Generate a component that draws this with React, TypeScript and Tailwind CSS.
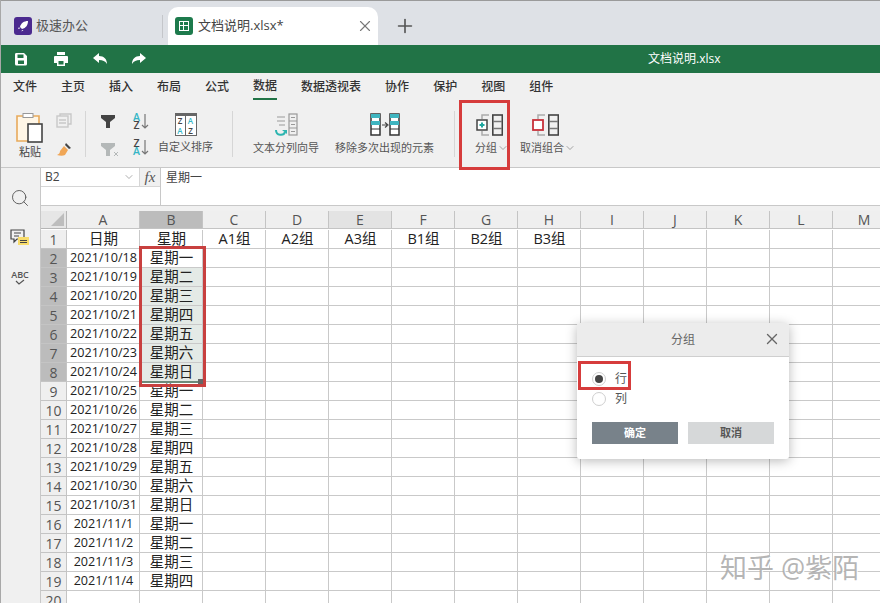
import { ChevronDown, Plus, Search, X } from "lucide-react";

const COLUMNS = ["A", "B", "C", "D", "E", "F", "G", "H", "I", "J", "K", "L", "M"];
const MENU = ["文件", "主页", "插入", "布局", "公式", "数据", "数据透视表", "协作", "保护", "视图", "组件"];
const DATES = [
  "2021/10/18", "2021/10/19", "2021/10/20", "2021/10/21", "2021/10/22", "2021/10/23", "2021/10/24",
  "2021/10/25", "2021/10/26", "2021/10/27", "2021/10/28", "2021/10/29", "2021/10/30", "2021/10/31",
  "2021/11/1", "2021/11/2", "2021/11/3", "2021/11/4",
];
const DAYS = ["星期一", "星期二", "星期三", "星期四", "星期五", "星期六", "星期日"];
const HEADINGS = ["日期", "星期", "A1组", "A2组", "A3组", "B1组", "B2组", "B3组", "", "", "", "", ""];

function rowCells(row: number): string[] {
  if (row === 1) return HEADINGS;
  if (row > 19) return Array(13).fill("");
  return [DATES[row - 2], DAYS[(row - 2) % 7], ...Array(11).fill("")];
}

function Sheet() {
  const rows = Array.from({ length: 19 }, (_, i) => i + 1).concat(20);
  return (
    <div className="grid grid-cols-[26px_73px_repeat(12,63px)] auto-rows-[19px] w-[865px]">
      {/* corner */}
      <div className="h-[18px] bg-[#e6e6e6] border-r border-b border-[#b5b5b5] flex items-end justify-end pr-[2px] pb-[2px]">
        <div className="w-0 h-0 border-l-[13px] border-l-transparent border-b-[13px] border-b-[#bdbdbd]" />
      </div>
      {COLUMNS.map((c) => (
        <div
          key={c}
          className={`h-[18px] flex items-center justify-center text-[14px] text-[#555] border-r border-b border-[#c4c4c4] ${
            c === "B" ? "bg-[#bcbcbc]" : c === "E" ? "bg-[#e3e3e3]" : "bg-[#efefef]"
          }`}
        >
          {c}
        </div>
      ))}
      {rows.map((r) => {
        const inRange = r >= 2 && r <= 8;
        return [
          <div
            key={`h${r}`}
            className={`flex items-center justify-center text-[14px] text-[#555] border-r border-b border-[#c4c4c4] ${
              inRange ? "bg-[#bcbcbc]" : "bg-[#efefef]"
            }`}
          >
            {r}
          </div>,
          ...rowCells(r).map((text, i) => (
            <div
              key={`${r}-${i}`}
              className={`flex items-center justify-center pl-px whitespace-nowrap border-r border-b border-[#c9c9c9] text-[#222] ${
                i === 0 && r > 1 ? "text-[12.6px]" : "text-[14.5px]"
              } ${i === 1 && r >= 3 && r <= 8 ? "bg-[#e4eae6]" : "bg-white"}`}
            >
              {text}
            </div>
          )),
        ];
      })}
    </div>
  );
}

function GroupIcon({ cancel }: { cancel?: boolean }) {
  return (
    <svg width="27" height="22" viewBox="0 0 27 22" fill="none">
      <path d="M6 5V1h7M6 17v4h7" stroke="#aaa" strokeWidth="1.5" />
      <rect x="16.800" y="1" width="9.500" height="20" stroke="#444" strokeWidth="1.6" />
      <path d="M17 7.500h9M17 14.500h9" stroke="#777" strokeWidth="1.3" />
      {cancel ? (
        <rect x="1" y="6" width="10" height="10" fill="#fff" stroke="#c8313a" strokeWidth="1.800" />
      ) : (
        <>
          <rect x="1" y="6" width="10" height="10" fill="#fff" stroke="#444" strokeWidth="1.500" />
          <path d="M6 8.500v5M3.500 11h5" stroke="#1fa8a0" strokeWidth="2" />
        </>
      )}
    </svg>
  );
}

function SortArrow() {
  return (
    <svg width="8" height="16" viewBox="0 0 8 16" fill="none" stroke="#777" strokeWidth="1.2">
      <path d="M4 1v14M1 12l3 3 3-3" />
    </svg>
  );
}

function Ribbon() {
  return (
    <div className="h-[67px] flex items-start bg-[#f0f0f0] border-b border-[#c8c8c8] text-[11px] text-[#555] shrink-0 box-content">
      {/* clipboard */}
      <div className="ml-[15px] w-[30px] pt-[12px] flex flex-col items-center">
        <svg width="30" height="32" viewBox="0 0 30 32" fill="none">
          <path d="M2 4h22v25H2z" fill="#fff6e6" stroke="#e8aa5c" strokeWidth="1.6" />
          <rect x="8" y="1.500" width="10" height="4" fill="#fff" stroke="#999" />
          <rect x="13" y="12" width="14" height="18" fill="#fff" stroke="#444" strokeWidth="1.6" />
        </svg>
        <span className="text-[#444] whitespace-nowrap">粘贴</span>
      </div>
      <div className="ml-[11px] w-[16px] pt-[13px] flex flex-col gap-[14px]">
        <svg width="16" height="15" viewBox="0 0 16 15" fill="none" stroke="#c8c8c8" strokeWidth="1.4">
          <path d="M4 3V1h11v10h-3" />
          <rect x="1" y="3" width="11" height="11" fill="#f0f0f0" />
          <path d="M3 7h7M3 10h7" />
        </svg>
        <svg width="16" height="16" viewBox="0 0 16 16">
          <path d="M10 1l5 5-2 1-4-4z" fill="#444" />
          <path d="M8 4l4 4-3 5c-2 1-5 1-8 0 2-1 3-2 3-4z" fill="#f0a656" />
        </svg>
      </div>
      <div className="ml-[13px] mt-[11px] w-px h-[46px] bg-[#d6d6d6]" />
      {/* filter and sort */}
      <div className="ml-[14px] w-[16px] pt-[14px] flex flex-col gap-[13px]">
        <svg width="16" height="15" viewBox="0 0 16 15">
          <path d="M1 1h14v3L10 8v6H6V8L1 4z" fill="#444" />
        </svg>
        <svg width="20" height="15" viewBox="0 0 20 15">
          <path d="M1 1h14v3L10 8v6H6V8L1 4z" fill="#b4b8b8" />
          <path d="M14 10l4 4M18 10l-4 4" stroke="#b4b8b8" />
        </svg>
      </div>
      <div className="ml-[17px] w-[16px] pt-[13px] flex flex-col gap-[10px] text-[10.5px] leading-[8px] font-semibold">
        <div className="flex items-center gap-[1px]">
          <span className="block text-center whitespace-pre-line text-[#444] first-line:text-[#35b6c6]">{"A\nZ"}</span>
          <SortArrow />
        </div>
        <div className="flex items-center gap-[1px]">
          <span className="block text-center whitespace-pre-line text-[#35b6c6] first-line:text-[#444]">{"Z\nA"}</span>
          <SortArrow />
        </div>
      </div>
      <div className="ml-[9px] w-[55px] pt-[13px] flex flex-col items-center">
        <div className="relative w-[22px] h-[23px] border border-[#666] border-t-[3px] bg-white grid grid-cols-2 grid-rows-2 text-[8px] leading-[10px] text-center font-semibold">
          <span className="text-[#444] border-r border-[#666]">Z</span>
          <span className="text-[#35b6c6]">A</span>
          <span className="text-[#35b6c6] border-r border-[#666]">A</span>
          <span className="text-[#444]">Z</span>
        </div>
        <span className="mt-[3px] whitespace-nowrap">自定义排序</span>
      </div>
      <div className="ml-[19px] mt-[11px] w-px h-[46px] bg-[#d6d6d6]" />
      {/* text tools */}
      <div className="ml-[20px] w-[66px] pt-[13px] flex flex-col items-center">
        <svg width="24" height="24" viewBox="0 0 24 24" fill="none">
          <path d="M3 4h8M3 8h8M5 12h6" stroke="#999" strokeWidth="1.2" />
          <rect x="15" y="1" width="8" height="21" stroke="#999" strokeWidth="1.2" />
          <path d="M15 8h8M15 15h8M17 4.500h4M17 11.500h4M17 18.500h4" stroke="#999" />
          <path d="M2 17c0 6 8 6 9 2" stroke="#2db5b0" strokeWidth="2" />
          <path d="M8 17h5v4z" fill="#2db5b0" />
        </svg>
        <span className="mt-[3px] whitespace-nowrap">文本分列向导</span>
      </div>
      <div className="ml-[16px] w-[99px] pt-[13px] flex flex-col items-center">
        <svg width="30" height="24" viewBox="0 0 30 24" fill="none">
          <rect x="1" y="1" width="9" height="21" fill="#fff" stroke="#333" strokeWidth="1.5" />
          <rect x="20" y="1" width="9" height="21" fill="#fff" stroke="#333" strokeWidth="1.5" />
          <path d="M1 1h9v4H1zM20 1h9v4h-9zM1 8h9v4H1zM20 8h9v4h-9z" fill="#3fb5c0" />
          <path d="M1 16h9M20 16h9" stroke="#333" />
          <path d="M12 12h5M15 9.500l3 2.500-3 2.500" stroke="#444" strokeWidth="1.2" />
        </svg>
        <span className="mt-[3px] whitespace-nowrap">移除多次出现的元素</span>
      </div>
      <div className="ml-[20px] mt-[11px] w-px h-[46px] bg-[#d6d6d6]" />
      {/* group */}
      <div className="ml-[20px] w-[36px] pt-[14px] flex flex-col items-start">
        <span className="ml-[1px]">
          <GroupIcon />
        </span>
        <div className="mt-[4px] flex items-center whitespace-nowrap">
          分组
          <ChevronDown className="size-[12px]" strokeWidth={1} />
        </div>
      </div>
      <div className="ml-[9px] w-[55px] pt-[14px] flex flex-col items-start">
        <span className="ml-[12px]">
          <GroupIcon cancel />
        </span>
        <div className="mt-[4px] flex items-center whitespace-nowrap">
          取消组合
          <ChevronDown className="size-[12px]" strokeWidth={1} />
        </div>
      </div>
    </div>
  );
}

function Dialog() {
  return (
    <div className="absolute left-[577px] top-[323px] w-[212px] h-[136px] bg-white rounded-[3px] shadow-[0_2px_12px_rgba(0,0,0,0.28)] overflow-hidden">
      <div className="h-[34px] pt-px bg-[#ececec] border-b border-[#cfcfcf] flex items-center justify-center relative text-[12px] text-[#666]">
        分组
        <X className="absolute right-[8px] top-[7px] size-[18px] text-[#666]" strokeWidth={1.8} />
      </div>
      <div className="pl-[15px] pt-[15px] flex flex-col gap-[6px] text-[12px] text-[#555]">
        <div className="flex items-center gap-[9px] h-[14px]">
          <span className="size-[14px] rounded-full border border-[#cfcfcf] flex items-center justify-center">
            <span className="size-[8px] rounded-full bg-[#444]" />
          </span>
          行
        </div>
        <div className="flex items-center gap-[9px] h-[14px]">
          <span className="size-[14px] rounded-full border border-[#cfcfcf]" />
          列
        </div>
      </div>
      <div className="pl-[15px] mt-[16px] flex gap-[10px] text-[11px] font-semibold">
        <div className="w-[86px] h-[22px] bg-[#78828a] text-white flex items-center justify-center">确定</div>
        <div className="w-[86px] h-[22px] bg-[#d6d8d9] text-[#555] flex items-center justify-center">取消</div>
      </div>
    </div>
  );
}

export default function App() {
  return (
    <div className="relative w-[880px] h-[603px] overflow-hidden bg-white flex flex-col font-['Open_Sans','Noto_Sans_CJK_SC',sans-serif]">
      {/* browser tabs */}
      <div className="h-[45px] shrink-0 bg-[#dee1e6] border-t border-[#9a9a9a] flex items-end pl-[14px]">
        <div className="w-[148px] h-[38px] flex items-center gap-[4px] text-[13px] text-[#555]">
          <span className="size-[18px] rounded-[3px] bg-[#4b2a8f] flex items-center justify-center">
            <svg width="12" height="12" viewBox="0 0 12 12" fill="#fff">
              <path d="M11 1C7 1 4 3 3 7l2 2c4-1 6-4 6-8zM2 7l-1 2 2-.5zM5 10l-.5 1.500L6.500 10z" />
            </svg>
          </span>
          极速办公
        </div>
        <div className="mb-[7px] w-px h-[23px] bg-[#c4c6ca]" />
        <div className="ml-[5px] w-[210px] h-[38px] bg-white rounded-t-[10px] flex items-center pl-[7px] text-[13px] text-[#444]">
          <span className="size-[18px] rounded-[3px] bg-[#1d7a4c] flex items-center justify-center">
            <span className="size-[10px] border border-white grid grid-cols-2 grid-rows-2">
              <span className="border-r border-b border-white" />
              <span className="border-b border-white" />
              <span className="border-r border-white" />
              <span />
            </span>
          </span>
          <span className="ml-[5px]">文档说明.xlsx*</span>
          <X className="ml-auto mr-[4px] size-[18px] text-[#777]" strokeWidth={1.5} />
        </div>
        <Plus className="ml-[16px] mb-[8px] size-[22px] text-[#555]" strokeWidth={1.8} />
      </div>
      {/* green title bar */}
      <div className="relative h-[28px] shrink-0 bg-[#217346] flex items-center pl-[13px] gap-[24px] text-white">
        <svg width="16" height="16" viewBox="0 0 16 16" fill="#fff">
          <path fillRule="evenodd" d="M3 2h8l3 3v8a1.500 1.500 0 0 1-1.500 1.500h-9A1.500 1.500 0 0 1 2 13V3.500A1.500 1.500 0 0 1 3 2zm1.500 1.500V7h6V3.500zM5 9.500V13h6V9.500z" />
        </svg>
        <svg width="16" height="16" viewBox="0 0 16 16" fill="#fff">
          <path fillRule="evenodd" d="M4 1h8v3H4zM2 5h12a1 1 0 0 1 1 1v6h-3v3H4v-3H1V6a1 1 0 0 1 1-1zm3.500 5v3.500h5V10z" />
        </svg>
        <svg width="16" height="16" viewBox="0 0 16 16" fill="#fff" className="-ml-[1px]">
          <path d="M1 7l6-5v3c5 0 8 3 8 8-2-3-4-4-8-4v3z" />
        </svg>
        <svg width="16" height="16" viewBox="0 0 16 16" fill="#fff" className="-ml-[1px]">
          <path d="M15 7L9 2v3c-5 0-8 3-8 8 2-3 4-4 8-4v3z" />
        </svg>
        <span className="absolute left-[648px] top-[5px] text-[12px] leading-[18px] whitespace-nowrap">文档说明.xlsx</span>
      </div>
      {/* menu */}
      <div className="h-[27px] shrink-0 bg-[#f0f0f0] flex items-stretch pl-[13px] gap-[24px] text-[12px] font-medium text-[#333]">
        {MENU.map((m) => (
          <div key={m} className={`flex items-center ${m === "数据" ? "border-b-2 border-[#217346]" : ""}`}>
            {m}
          </div>
        ))}
      </div>
      <Ribbon />
      {/* body */}
      <div className="flex flex-1 min-h-0">
        <div className="w-[41px] shrink-0 bg-[#f0f0f0] border-r border-[#c8c8c8] flex flex-col items-center pt-[20px] gap-[21px] text-[#555]">
          <Search className="size-[20px]" strokeWidth={1.1} />
          <div className="relative h-[16px] w-[17px] -ml-[3px]">
            <svg width="16" height="15" viewBox="0 0 16 15" fill="none" stroke="#444" strokeWidth="1.2">
              <path d="M1 1h13v9H7l-3 3v-3H1zM4 4h7M4 7h5" />
            </svg>
            <span className="absolute left-[8px] top-[8px] w-[11px] h-[8px] bg-[#f8dc6b] flex flex-col justify-center gap-[1px] px-[2px]">
              <span className="h-px bg-[#444]" />
              <span className="h-px bg-[#444]" />
            </span>
          </div>
          <div className="mt-[4px] flex flex-col items-center text-[9px] leading-[9px] font-semibold text-[#555]">
            ABC
            <svg width="10" height="6" viewBox="0 0 10 6" fill="none" stroke="#555" strokeWidth="1.2">
              <path d="M1 2l3 3 5-4" />
            </svg>
          </div>
        </div>
        <div className="flex-1 min-w-0 flex flex-col overflow-hidden">
          {/* formula bar */}
          <div className="h-[43px] shrink-0 bg-[#f0f0f0] pb-[5px]">
            <div className="h-[38px] flex bg-white border-b border-[#c8c8c8] text-[12px] text-[#444]">
              <div className="w-[120px] flex flex-col border-r border-[#c8c8c8]">
                <div className="h-[19px] flex">
                  <div className="w-[99px] flex items-center justify-between pl-[4px] pr-[4px] border-b border-r border-[#d6d6d6]">
                    B2
                    <ChevronDown className="size-[12px] text-[#777]" strokeWidth={1.2} />
                  </div>
                  <div className="flex-1 flex items-center justify-center bg-[#f0f0f0] border-b border-[#d6d6d6] font-['Liberation_Serif',serif] italic text-[15px] text-[#555]">
                    fx
                  </div>
                </div>
              </div>
              <div className="pl-[5px] h-[19px] flex items-center">星期一</div>
            </div>
          </div>
          <Sheet />
        </div>
      </div>
      {/* window edge */}
      <div className="absolute left-0 top-0 bottom-0 w-px bg-[#a8a8a8]" />
      {/* red call-outs */}
      <div className="absolute left-[459px] top-[100px] w-[51px] h-[70px] border-[3px] border-[#d63c3c]" />
      <div className="absolute left-[139px] top-[246px] w-[67px] h-[141px] border-[3px] border-[#c8403f]">
        <div className="absolute left-0 right-0 bottom-[1px] h-[2px] bg-[#6d8a7a]" />
        <div className="absolute right-0 bottom-0 size-[5px] bg-[#666]" />
      </div>
      <Dialog />
      <div className="absolute left-[578px] top-[361px] w-[53px] h-[29px] border-[3px] border-[#d63c3c]" />
      {/* watermark */}
      <div className="absolute left-[720px] top-[549px] text-[27px] leading-[38px] text-[#a8a8a8]/85 whitespace-nowrap [text-shadow:1px_1px_0_#fff]">
        知乎 @紫陌
      </div>
    </div>
  );
}
